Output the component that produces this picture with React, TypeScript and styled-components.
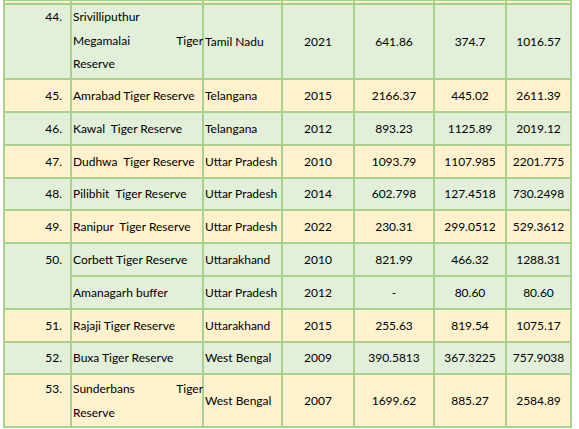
import React from "react";
import styled, { createGlobalStyle } from "styled-components";

const Global = createGlobalStyle`
  html, body { margin: 0; padding: 0; background: #ffffff; }
  body { font-family: Lato, "Open Sans", sans-serif; }
`;

const GREEN = "#E2EFD9";
const YELLOW = "#FFF2CC";
const LINE = "#A9D18E";

const Page = styled.div`
  padding-left: 3px;
  width: 579px;
  height: 429px;
  overflow: hidden;
  box-sizing: border-box;
`;

const Table = styled.table`
  border-collapse: collapse;
  table-layout: fixed;
  width: 569px;
  margin-top: -1px;
  font-size: 12px;
  color: #000;
`;

const Row = styled.tr<{ $bg: string; $h: number }>`
  background: ${(p) => p.$bg};
  height: ${(p) => p.$h}px;
`;

const Cell = styled.td<{ $align?: string; $valign?: string; $pt?: number }>`
  border: 2px solid ${LINE};
  padding: ${(p) => p.$pt ?? 0}px 1px 0 1px;
  text-align: ${(p) => p.$align ?? "center"};
  vertical-align: ${(p) => p.$valign ?? "middle"};
  line-height: 23.5px;
  white-space: pre;
  overflow: visible;
`;

const Num = styled(Cell)`
  text-align: right;
  padding-right: 8px;
`;

const Name = styled(Cell)`
  text-align: left;
  padding-left: 1px;
  padding-right: 0;
`;

const Justified = styled.div`
  display: flex;
  justify-content: space-between;
  margin-right: -1px;
`;

type R = {
  n?: string;
  nSpan?: number;
  nTop?: number;
  name: React.ReactNode;
  nameTop?: number;
  nameValign?: string;
  state: string;
  year: string;
  a: string;
  b: string;
  c: string;
  bg: string;
  h: number;
  skipN?: boolean;
};

const rows: R[] = [
  {
    n: "44.",
    nTop: 0,
    nameTop: 0,
    nameValign: "top",
    name: (
      <>
        <div>Srivilliputhur</div>
        <Justified>
          <span>Megamalai</span>
          <span>Tiger</span>
        </Justified>
        <div>Reserve</div>
      </>
    ),
    state: "Tamil Nadu",
    year: "2021",
    a: "641.86",
    b: "374.7",
    c: "1016.57",
    bg: GREEN,
    h: 75,
  },
  { n: "45.", name: "Amrabad Tiger Reserve", state: "Telangana", year: "2015", a: "2166.37", b: "445.02", c: "2611.39", bg: YELLOW, h: 33 },
  { n: "46.", name: "Kawal  Tiger Reserve", state: "Telangana", year: "2012", a: "893.23", b: "1125.89", c: "2019.12", bg: GREEN, h: 33 },
  { n: "47.", name: "Dudhwa  Tiger Reserve", state: "Uttar Pradesh", year: "2010", a: "1093.79", b: "1107.985", c: "2201.775", bg: YELLOW, h: 33 },
  { n: "48.", name: "Pilibhit  Tiger Reserve", state: "Uttar Pradesh", year: "2014", a: "602.798", b: "127.4518", c: "730.2498", bg: GREEN, h: 32 },
  { n: "49.", name: "Ranipur  Tiger Reserve", state: "Uttar Pradesh", year: "2022", a: "230.31", b: "299.0512", c: "529.3612", bg: YELLOW, h: 33 },
  { n: "50.", nSpan: 2, nTop: 4, name: "Corbett Tiger Reserve", state: "Uttarakhand", year: "2010", a: "821.99", b: "466.32", c: "1288.31", bg: GREEN, h: 33 },
  { skipN: true, name: "Amanagarh buffer", state: "Uttar Pradesh", year: "2012", a: "-", b: "80.60", c: "80.60", bg: GREEN, h: 33 },
  { n: "51.", name: "Rajaji Tiger Reserve", state: "Uttarakhand", year: "2015", a: "255.63", b: "819.54", c: "1075.17", bg: YELLOW, h: 33 },
  { n: "52.", name: "Buxa Tiger Reserve", state: "West Bengal", year: "2009", a: "390.5813", b: "367.3225", c: "757.9038", bg: GREEN, h: 32 },
  {
    n: "53.",
    nTop: 2,
    nameTop: 2,
    nameValign: "top",
    name: (
      <>
        <Justified>
          <span>Sunderbans</span>
          <span>Tiger</span>
        </Justified>
        <div>Reserve</div>
      </>
    ),
    state: "West Bengal",
    year: "2007",
    a: "1699.62",
    b: "885.27",
    c: "2584.89",
    bg: YELLOW,
    h: 53,
  },
];

export default function App() {
  return (
    <Page>
      <Global />
      <Table>
        <colgroup>
          <col style={{ width: 67 }} />
          <col style={{ width: 132 }} />
          <col style={{ width: 79 }} />
          <col style={{ width: 72 }} />
          <col style={{ width: 80 }} />
          <col style={{ width: 72 }} />
          <col style={{ width: 65 }} />
        </colgroup>
        <tbody>
          <Row $bg={YELLOW} $h={4}>
            <Cell />
            <Cell />
            <Cell />
            <Cell />
            <Cell />
            <Cell />
            <Cell />
          </Row>
          {rows.map((r, i) => (
            <Row key={i} $bg={r.bg} $h={r.h}>
              {!r.skipN && (
                <Num
                  rowSpan={r.nSpan}
                  $valign={r.nTop !== undefined ? "top" : "middle"}
                  $pt={r.nTop}
                >
                  {r.n}
                </Num>
              )}
              <Name $valign={r.nameValign} $pt={r.nameTop}>
                {r.name}
              </Name>
              <Cell $align="left">{r.state}</Cell>
              <Cell>{r.year}</Cell>
              <Cell>{r.a}</Cell>
              <Cell>{r.b}</Cell>
              <Cell>{r.c}</Cell>
            </Row>
          ))}
        </tbody>
      </Table>
    </Page>
  );
}
